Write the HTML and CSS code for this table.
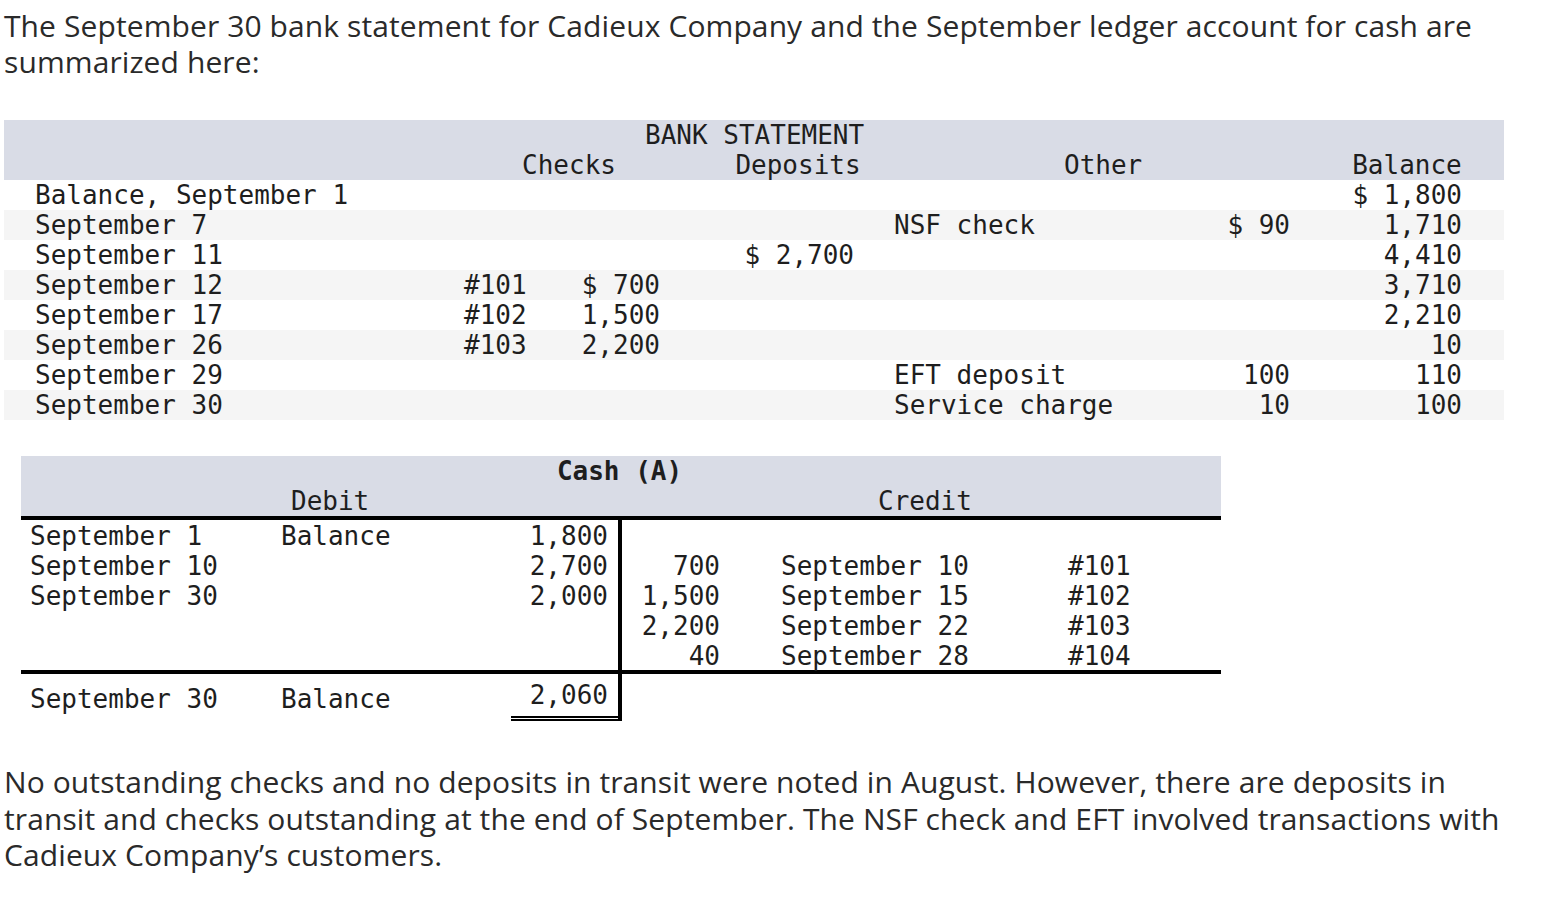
FILE: index.html
```html
<!DOCTYPE html>
<html lang="en">
<head>
<meta charset="utf-8">
<title>Cadieux Company bank statement</title>
<link rel="stylesheet" href="styles.css">
</head>
<body>
<div class="page">
  <p class="para">The September 30 bank statement for Cadieux Company and the September ledger account for cash are summarized here:</p>

  <div class="bank">
    <div class="bank-head">
      <div class="bank-title">BANK STATEMENT</div>
      <div class="bank-cols">
        <span></span>
        <span class="hc">Checks</span>
        <span></span>
        <span class="hc">Deposits</span>
        <span></span>
        <span class="hc">Other</span>
        <span></span>
        <span class="hc">Balance</span>
        <span></span>
      </div>
    </div>
    <div class="bank-body">
      <div class="brow">
        <span class="c-label">Balance, September 1</span><span class="c-no"></span><span class="c-amt"></span><span class="c-dep"></span><span class="c-desc"></span><span class="c-oamt"></span><span class="c-bal">$ 1,800</span><span></span>
      </div>
      <div class="brow alt">
        <span class="c-label">September 7</span><span class="c-no"></span><span class="c-amt"></span><span class="c-dep"></span><span class="c-desc">NSF check</span><span class="c-oamt">$ 90</span><span class="c-bal">1,710</span><span></span>
      </div>
      <div class="brow">
        <span class="c-label">September 11</span><span class="c-no"></span><span class="c-amt"></span><span class="c-dep">$ 2,700</span><span class="c-desc"></span><span class="c-oamt"></span><span class="c-bal">4,410</span><span></span>
      </div>
      <div class="brow alt">
        <span class="c-label">September 12</span><span class="c-no">#101</span><span class="c-amt">$ 700</span><span class="c-dep"></span><span class="c-desc"></span><span class="c-oamt"></span><span class="c-bal">3,710</span><span></span>
      </div>
      <div class="brow">
        <span class="c-label">September 17</span><span class="c-no">#102</span><span class="c-amt">1,500</span><span class="c-dep"></span><span class="c-desc"></span><span class="c-oamt"></span><span class="c-bal">2,210</span><span></span>
      </div>
      <div class="brow alt">
        <span class="c-label">September 26</span><span class="c-no">#103</span><span class="c-amt">2,200</span><span class="c-dep"></span><span class="c-desc"></span><span class="c-oamt"></span><span class="c-bal">10</span><span></span>
      </div>
      <div class="brow">
        <span class="c-label">September 29</span><span class="c-no"></span><span class="c-amt"></span><span class="c-dep"></span><span class="c-desc">EFT deposit</span><span class="c-oamt">100</span><span class="c-bal">110</span><span></span>
      </div>
      <div class="brow alt">
        <span class="c-label">September 30</span><span class="c-no"></span><span class="c-amt"></span><span class="c-dep"></span><span class="c-desc">Service charge</span><span class="c-oamt">10</span><span class="c-bal">100</span><span></span>
      </div>
    </div>
  </div>

  <div class="taccount">
    <div class="t-head">
      <div class="t-title">Cash (A)</div>
      <div class="t-sides">
        <span class="t-debit">Debit</span>
        <span class="t-credit">Credit</span>
      </div>
    </div>
    <div class="t-body">
      <div class="t-left">
        <div class="lrow"><span>September 1</span><span>Balance</span><span class="num">1,800</span></div>
        <div class="lrow"><span>September 10</span><span></span><span class="num">2,700</span></div>
        <div class="lrow"><span>September 30</span><span></span><span class="num">2,000</span></div>
      </div>
      <div class="t-right">
        <div class="rrow"><span class="num"></span><span></span><span></span></div>
        <div class="rrow"><span class="num">700</span><span class="r-date">September 10</span><span>#101</span></div>
        <div class="rrow"><span class="num">1,500</span><span class="r-date">September 15</span><span>#102</span></div>
        <div class="rrow"><span class="num">2,200</span><span class="r-date">September 22</span><span>#103</span></div>
        <div class="rrow"><span class="num">40</span><span class="r-date">September 28</span><span>#104</span></div>
      </div>
    </div>
    <div class="t-foot">
      <div class="f-left">
        <span class="f-label">September 30</span>
        <span class="f-label">Balance</span>
        <span class="f-total">2,060</span>
      </div>
    </div>
  </div>

  <p class="para para-bottom">No outstanding checks and no deposits in transit were noted in August. However, there are deposits in transit and checks outstanding at the end of September. The NSF check and EFT involved transactions with Cadieux Company’s customers.</p>
</div>
</body>
</html>
```
FILE: styles.css
```css
html, body {
  margin: 0;
  padding: 0;
  background: #ffffff;
}

.page {
  padding: 8px 4px 0 4px;
}

.para {
  margin: 0;
  width: 1510px;
  font-family: "Open Sans", "Liberation Sans", sans-serif;
  font-size: 30px;
  letter-spacing: 0.1px;
  line-height: 36px;
  color: #2a2a2a;
}

.para-bottom {
  margin-top: 43px;
  line-height: 36.5px;
}

/* ---------- Bank statement ---------- */
.bank {
  margin-top: 40px;
  width: 1500px;
  font-family: "DejaVu Sans Mono", "Liberation Mono", monospace;
  font-size: 26px;
  line-height: 30px;
  color: #1e1e1e;
}

.bank-head {
  background: #d9dce6;
}

.bank-title {
  height: 30px;
  padding-left: 641px;
  white-space: nowrap;
}

.bank-cols {
  display: grid;
  grid-template-columns: 514px 102px 115px 126px 203px 78px 210px 110px 42px;
  height: 30px;
}

.hc {
  text-align: center;
  white-space: nowrap;
}

.brow {
  display: grid;
  grid-template-columns: 460px 76px 120px 194px 346px 90px 172px 42px;
  height: 30px;
  white-space: nowrap;
}

.brow.alt {
  background: #f5f5f5;
}

.c-label {
  padding-left: 31px;
}

.c-amt,
.c-dep,
.c-oamt,
.c-bal {
  text-align: right;
}

.c-desc {
  padding-left: 40px;
}

/* ---------- T account ---------- */
.taccount {
  margin-top: 36px;
  margin-left: 17px;
  width: 1200px;
  font-family: "DejaVu Sans Mono", "Liberation Mono", monospace;
  font-size: 26px;
  line-height: 30px;
  color: #1e1e1e;
  white-space: nowrap;
}

.t-head {
  background: #d9dce6;
  height: 60px;
}

.t-title {
  height: 30px;
  padding-right: 3px;
  text-align: center;
  font-weight: bold;
}

.t-sides {
  display: grid;
  grid-template-columns: 601px 599px;
  height: 30px;
}

.t-debit {
  padding-left: 270px;
}

.t-credit {
  padding-left: 256px;
}

.t-body {
  display: grid;
  grid-template-columns: 601px 599px;
  border-top: 4px solid #000;
  border-bottom: 4px solid #000;
  height: 158px;
  box-sizing: border-box;
}

.t-left {
  border-right: 4px solid #000;
  padding: 1px 10px 0 9px;
}

.lrow {
  display: grid;
  grid-template-columns: 251px 150px 1fr;
  height: 30px;
}

.num {
  text-align: right;
}

.t-right {
  padding-top: 1px;
}

.rrow {
  display: grid;
  grid-template-columns: 98px 348px 1fr;
  height: 30px;
}

.r-date {
  padding-left: 61px;
}

.t-foot {
  display: flex;
}

.f-left {
  width: 601px;
  height: 47px;
  box-sizing: border-box;
  border-right: 4px solid #000;
  padding-left: 9px;
  display: grid;
  grid-template-columns: 251px 150px 1fr;
}

.f-label {
  padding-top: 10px;
}

.f-total {
  justify-self: end;
  align-self: start;
  width: 107px;
  box-sizing: border-box;
  padding: 6px 10px 6px 0;
  text-align: right;
  border-bottom: 5px double #000;
}
```
